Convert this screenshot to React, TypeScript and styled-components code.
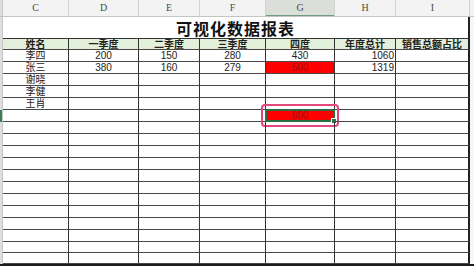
import React from "react";
import styled, { createGlobalStyle } from "styled-components";

const COLS = [66, 70, 61, 66, 69, 61, 74];
const LETTERS = ["C", "D", "E", "F", "G", "H", "I"];
const SELECTED_COL = 4;

type Align = "center" | "right" | "left";

const Global = createGlobalStyle`
  html, body { margin: 0; padding: 0; background: #ffffff; }
  body { font-family: "Liberation Sans", "Noto Sans CJK SC", sans-serif; }
`;

const Sheet = styled.div`
  width: 474px;
  height: 268px;
  overflow: hidden;
  background: #ffffff;
  display: flex;
  flex-direction: column;
`;

const HeaderBar = styled.div`
  display: flex;
  height: 17px;
  flex: none;
  background: #f3f3f3;
  border-bottom: 1px solid #c4c4c4;
  box-sizing: border-box;
`;

const Stub = styled.div<{ $active?: boolean }>`
  width: 3px;
  flex: none;
  background: ${(p) => (p.$active ? "#3f7d57" : "#dedede")};
  border-right: 1px solid #c8c8c8;
  box-sizing: border-box;
`;

const ColHead = styled.div<{ $w: number; $sel?: boolean }>`
  width: ${(p) => p.$w}px;
  flex: none;
  display: flex;
  align-items: center;
  justify-content: center;
  font-family: "Liberation Serif", "DejaVu Serif", serif;
  font-size: 10px;
  line-height: 10px;
  color: #4a4a4a;
  border-right: 1px solid #d2d2d2;
  box-sizing: border-box;
  background: ${(p) => (p.$sel ? "#dadfda" : "transparent")};
  box-shadow: ${(p) => (p.$sel ? "inset 0 -1px 0 #6f9c7f" : "none")};
`;

const TitleRow = styled.div`
  display: flex;
  height: 21px;
  flex: none;
`;

const TitleCell = styled.div`
  width: ${COLS.reduce((a, b) => a + b, 0)}px;
  flex: none;
  display: flex;
  align-items: center;
  justify-content: center;
  font-family: "Noto Sans CJK SC", sans-serif;
  font-weight: 700;
  font-size: 16px;
  line-height: 16px;
  color: #111;
  letter-spacing: 1px;
  border-right: 2px solid #222;
  box-sizing: border-box;
`;

const Row = styled.div<{ $h: number; $head?: boolean }>`
  display: flex;
  height: ${(p) => p.$h}px;
  flex: none;
  background: ${(p) => (p.$head ? "#e2efda" : "transparent")};
`;

const Cell = styled.div<{
  $w: number;
  $align?: Align;
  $bold?: boolean;
  $fill?: string;
  $last?: boolean;
  $head?: boolean;
}>`
  position: relative;
  width: ${(p) => p.$w}px;
  flex: none;
  display: flex;
  align-items: center;
  justify-content: ${(p) =>
    p.$align === "right" ? "flex-end" : p.$align === "left" ? "flex-start" : "center"};
  padding: 1px 1px 0;
  box-sizing: border-box;
  font-size: 10px;
  line-height: 10px;
  font-weight: ${(p) => (p.$bold ? 700 : 400)};
  color: #222;
  background: ${(p) => p.$fill ?? "transparent"};
  border-right: ${(p) => (p.$last ? "2px solid #222" : "1px solid #333")};
  border-top: ${(p) => (p.$head ? "1px solid #333" : "none")};
  border-bottom: 1px solid #484848;
  white-space: nowrap;
`;

const RedText = styled.span`
  color: #9a1010;
`;

const Tail = styled.div`
  flex: 1;
  background: #f7f7f7;
`;

const BottomRule = styled.div`
  height: 2px;
  flex: none;
  background: #1c1c1c;
`;

const Selection = styled.div`
  position: absolute;
  left: -1px;
  top: -1px;
  right: -1px;
  bottom: -1px;
  border: 2px solid #2a6e46;
  pointer-events: none;
`;

const FillHandle = styled.div`
  position: absolute;
  right: -3px;
  bottom: -3px;
  width: 4px;
  height: 4px;
  background: #2a6e46;
  border: 1px solid #ffffff;
`;

const Annotation = styled.div`
  position: absolute;
  left: -5px;
  top: -6px;
  width: 78px;
  height: 23px;
  border: 2px solid #e2487a;
  border-radius: 4px;
  box-sizing: border-box;
  pointer-events: none;
`;

type CellData = { text?: string; fill?: string; red?: boolean };

const data: CellData[][] = [
  [{ text: "李四" }, { text: "200" }, { text: "150" }, { text: "280" }, { text: "430" }, { text: "1060" }, {}],
  [{ text: "张三" }, { text: "380" }, { text: "160" }, { text: "279" }, { text: "500", fill: "#ff0000", red: true }, { text: "1319" }, {}],
  [{ text: "谢晓" }, {}, {}, {}, {}, {}, {}],
  [{ text: "李健" }, {}, {}, {}, {}, {}, {}],
  [{ text: "王肖" }, {}, {}, {}, {}, {}, {}],
];

const heads = ["姓名", "一季度", "二季度", "三季度", "四度", "年度总计", "销售总额占比"];
const BODY_ROWS = 18;
const SELECTED_ROW = 5;

export default function App() {
  const rows: React.ReactNode[] = [];
  for (let r = 0; r < BODY_ROWS; r++) {
    const rowData = data[r] ?? [];
    rows.push(
      <Row key={r} $h={r >= BODY_ROWS - 2 ? 11 : 12}>
        <Stub $active={r === SELECTED_ROW} />
        {COLS.map((w, c) => {
          const d = rowData[c] ?? {};
          const isSel = r === SELECTED_ROW && c === SELECTED_COL;
          return (
            <Cell
              key={c}
              $w={w}
              $align={c === 5 ? "right" : "center"}
              $fill={isSel ? "#ff0000" : d.fill}
              $last={c === COLS.length - 1}
            >
              {isSel ? (
                <>
                  <RedText>600</RedText>
                  <Selection />
                  <FillHandle />
                  <Annotation />
                </>
              ) : d.red ? (
                <RedText>{d.text}</RedText>
              ) : (
                d.text
              )}
            </Cell>
          );
        })}
        <Tail />
      </Row>
    );
  }

  return (
    <>
      <Global />
      <Sheet>
        <HeaderBar>
          <Stub />
          {COLS.map((w, i) => (
            <ColHead key={i} $w={w} $sel={i === SELECTED_COL}>
              {LETTERS[i]}
            </ColHead>
          ))}
        </HeaderBar>
        <TitleRow>
          <Stub />
          <TitleCell>可视化数据报表</TitleCell>
          <Tail />
        </TitleRow>
        <Row $h={12} $head>
          <Stub />
          {COLS.map((w, i) => (
            <Cell key={i} $w={w} $bold $head $last={i === COLS.length - 1}>
              {heads[i]}
            </Cell>
          ))}
          <Tail />
        </Row>
        {rows}
        <BottomRule />
      </Sheet>
    </>
  );
}
